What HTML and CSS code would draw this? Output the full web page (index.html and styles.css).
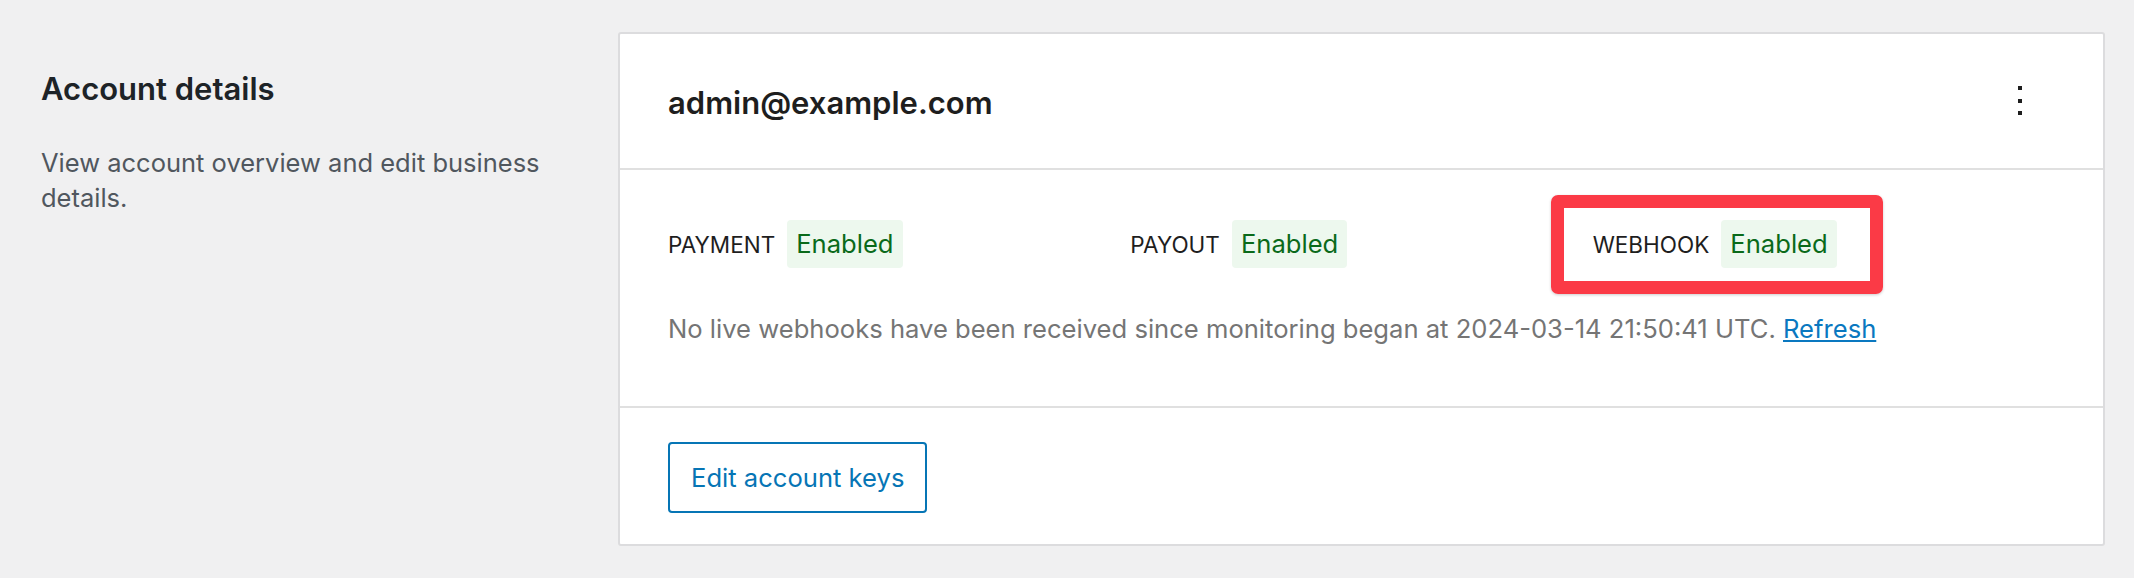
FILE: index.html
```html
<html>
<head>
<link rel="stylesheet" href="styles.css">
</head>
<body>
<div class="settings">
  <div class="intro">
    <h2>Account details</h2>
    <p>View account overview and edit business details.</p>
  </div>

  <div class="card">
    <div class="card-head">
      <h3>admin@example.com</h3>
      <button class="more" aria-label="More actions">
        <svg width="4" height="30" viewBox="0 0 4 30"><rect x="0" y="0" width="4" height="4" fill="#1e1e1e"/><rect x="0" y="13" width="4" height="4" fill="#1e1e1e"/><rect x="0" y="25" width="4" height="4" fill="#1e1e1e"/></svg>
      </button>
    </div>

    <div class="card-body">
      <div class="statuses">
        <div class="status"><span class="label">PAYMENT</span><span class="badge">Enabled</span></div>
        <div class="status"><span class="label">PAYOUT</span><span class="badge">Enabled</span></div>
        <div class="status highlighted"><span class="label">WEBHOOK</span><span class="badge">Enabled</span><span class="marker"></span></div>
      </div>
      <p class="note">No live webhooks have been received since monitoring began at 2024-03-14 21:50:41 UTC. <a href="#">Refresh</a></p>
    </div>

    <div class="card-foot">
      <button class="secondary">Edit account keys</button>
    </div>
  </div>
</div>
</body>
</html>
```

FILE: styles.css
```css
body{
margin:0; background-color:#f0f0f1; font-family:Inter, "Noto Sans", sans-serif; color:#1e1e1e;
}
.settings{
display:flex; padding:32px 29px 0 41px;
}
.intro{
width:577px; flex:none; padding-right:30px; box-sizing:border-box;
}
.intro h2{
margin:39px 0 0; font-size:31px; line-height:36px; font-weight:600; color:#1d2327;
}
.intro p{
margin:38px 0 0; font-size:25.5px; line-height:35px; color:#50575e;
}
.card{
flex:1; background:#fff; border:2px solid #dcdcde; border-radius:3px;
}
.card-head{
display:flex; align-items:center; justify-content:space-between; height:134px; padding:0 63px 0 48px; border-bottom:2px solid #e0e0e0;
}
.card-head h3{
margin:2px 0 0; font-size:31px; font-weight:600; color:#1e1e1e;
}
.more{
width:40px; height:48px; border:0; background:none; padding:0; display:flex; align-items:center; justify-content:center;
}
.card-body{
padding:50px 48px 60px; border-bottom:2px solid #e0e0e0;
}
.statuses{
display:grid; grid-template-columns:1fr 1fr 1fr;
}
.status{
display:flex; align-items:center; gap:12px; position:relative;
}
.label{
font-size:22.5px; color:#1e1e1e;
}
.badge{
height:48px; line-height:48px; padding:0 9px; border-radius:4px; background:#edf8ee; color:#0a6a1a; font-size:25.6px;
}
.marker{
position:absolute; left:-42px; top:-25px; width:332px; height:99px; box-sizing:border-box; border:13px solid #fb3a46; border-radius:7px; box-shadow:0 1px 3px rgba(0,0,0,0.2);
}
.note{
margin:43px 0 0; font-size:25.6px; line-height:35px; color:#757575;
}
.note a{
color:#0a78c0;
}
.card-foot{
padding:34px 48px 31px;
}
.secondary{
height:71px; padding:0 21px; border:2px solid #0675b5; border-radius:4px; background:#fff; color:#0675b5; font-family:Inter, "Noto Sans", sans-serif; font-size:25.6px;
}
```
